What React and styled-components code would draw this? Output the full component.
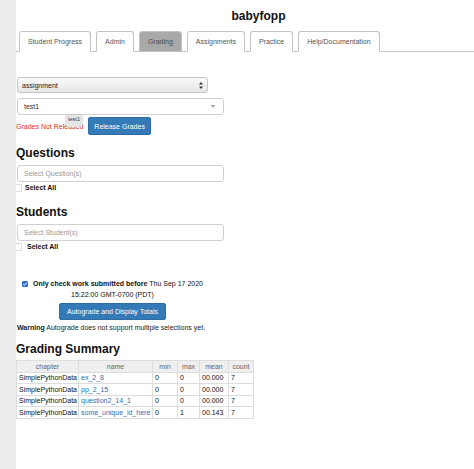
import styled, { createGlobalStyle } from 'styled-components';

const GlobalStyle = createGlobalStyle`
    html, body {
        margin: 0;
        padding: 0;
        background: #fff;
        font-family: "Liberation Sans", Arial, sans-serif;
        font-size: 7px;
        color: #222;
    }
`

const tabs = ['Student Progress', 'Admin', 'Grading', 'Assignments', 'Practice', 'Help/Documentation'];

const summary = [
    { chapter: 'SimplePythonData', name: 'ex_2_8', min: 0, max: 0, mean: '00.000', count: 7 },
    { chapter: 'SimplePythonData', name: 'pp_2_15', min: 0, max: 0, mean: '00.000', count: 7 },
    { chapter: 'SimplePythonData', name: 'question2_14_1', min: 0, max: 0, mean: '00.000', count: 7 },
    { chapter: 'SimplePythonData', name: 'some_unique_id_here', min: 0, max: 1, mean: '00.143', count: 7 },
];

const App = () => {
    return (
        <>
            <GlobalStyle />
            <Page>
                <Sidebar />
                <Main>
                    <Title>babyfopp</Title>
                    <TabBar>
                        {tabs.map(t => (
                            <Tab key={t} active={t === 'Grading'}>{t}</Tab>
                        ))}
                    </TabBar>

                    <NativeSelect>
                        <span>assignment</span>
                        <svg width="4" height="7" viewBox="0 0 4 7">
                            <path d="M2 0 L4 2.6 L0 2.6 Z M2 7 L4 4.4 L0 4.4 Z" fill="#333" />
                        </svg>
                    </NativeSelect>
                    <ChosenSelect>
                        <span>test1</span>
                        <svg width="4" height="3" viewBox="0 0 4 3">
                            <path d="M0 0 L4 0 L2 3 Z" fill="#999" />
                        </svg>
                    </ChosenSelect>

                    <GradesRow>
                        <NotReleased>Grades Not Released</NotReleased>
                        <Tooltip>test1</Tooltip>
                        <BlueButton>Release Grades</BlueButton>
                    </GradesRow>

                    <Heading top={11}>Questions</Heading>
                    <Input>Select Question(s)</Input>
                    <SelectAll indent={9}>
                        <EmptyBox />
                        Select All
                    </SelectAll>

                    <Heading top={13}>Students</Heading>
                    <Input>Select Student(s)</Input>
                    <SelectAll indent={11}>
                        <EmptyBox />
                        Select All
                    </SelectAll>

                    <Autograde>
                        <CheckLine>
                            <CheckedBox>
                                <svg width="6" height="6" viewBox="0 0 6 6">
                                    <path d="M1.2 3.1 L2.5 4.3 L4.8 1.6" stroke="#fff" strokeWidth="1" fill="none" />
                                </svg>
                            </CheckedBox>
                            <b>Only check work submitted before</b> Thu Sep 17 2020<br />
                            15:22:00 GMT-0700 (PDT)
                        </CheckLine>
                        <BlueButton wide>Autograde and Display Totals</BlueButton>
                    </Autograde>

                    <Warning><b>Warning</b> Autograde does not support multiple selections yet.</Warning>

                    <Heading top={9}>Grading Summary</Heading>
                    <Table>
                        <colgroup>
                            <col style={{ width: 62 }} />
                            <col style={{ width: 74 }} />
                            <col style={{ width: 25 }} />
                            <col style={{ width: 22 }} />
                            <col style={{ width: 29 }} />
                            <col style={{ width: 25 }} />
                        </colgroup>
                        <thead>
                            <tr>
                                <th>chapter</th>
                                <th>name</th>
                                <th>min</th>
                                <th>max</th>
                                <th>mean</th>
                                <th>count</th>
                            </tr>
                        </thead>
                        <tbody>
                            {summary.map(row => (
                                <tr key={row.name}>
                                    <td>{row.chapter}</td>
                                    <td><Link>{row.name}</Link></td>
                                    <td>{row.min}</td>
                                    <td>{row.max}</td>
                                    <td>{row.mean}</td>
                                    <td>{row.count}</td>
                                </tr>
                            ))}
                        </tbody>
                    </Table>
                </Main>
            </Page>
        </>
    )
}

const Page = styled.div`
    display: flex;
    min-height: 469px;
`

const Sidebar = styled.div`
    width: 16px;
    flex-shrink: 0;
    background: #ececec;
`

const Main = styled.div`
    flex: 1;
    padding-left: 1px;
`

const Title = styled.h1`
    margin: 0;
    padding: 9px 0 0 26px;
    text-align: center;
    font-size: 12px;
    line-height: 14px;
    font-weight: bold;
    color: #111;
`

const TabBar = styled.div`
    display: flex;
    gap: 5px;
    margin: 8px 0 0 -1px;
    padding-left: 3px;
    border-bottom: 1px solid #c8c8c8;
`

const Tab = styled.div`
    box-sizing: border-box;
    height: 21px;
    line-height: 19px;
    padding: 0 8px;
    margin-bottom: -1px;
    border: 1px solid #c4c4c4;
    border-bottom: ${p => p.active ? '1px solid #c4c4c4' : '1px solid #fff'};
    border-radius: 3px 3px 0 0;
    background: ${p => p.active ? '#a9a9a9' : '#fff'};
    color: ${p => p.active ? '#4a4a4a' : '#555'};
`

const NativeSelect = styled.div`
    display: flex;
    align-items: center;
    justify-content: space-between;
    box-sizing: border-box;
    width: 191px;
    height: 16px;
    margin-top: 25px;
    padding: 0 4px;
    border: 1px solid #c6c6c6;
    border-radius: 3px;
    background: linear-gradient(#fafafa, #e6e6e6);
    color: #222;
`

const ChosenSelect = styled.div`
    display: flex;
    align-items: center;
    justify-content: space-between;
    box-sizing: border-box;
    width: 207px;
    height: 17px;
    margin-top: 5px;
    padding: 0 8px 0 6px;
    border: 1px solid #d0d0d0;
    border-radius: 3px;
    background: #fff;
    color: #333;
`

const GradesRow = styled.div`
    position: relative;
    display: flex;
    align-items: center;
    gap: 5px;
    margin: 2px 0 0 -1px;
`

const NotReleased = styled.span`
    color: #e0312b;
`

const Tooltip = styled.span`
    position: absolute;
    left: 49px;
    top: -2px;
    width: 18px;
    height: 12px;
    box-sizing: border-box;
    padding-top: 1px;
    text-align: center;
    font-size: 5.5px;
    line-height: 6px;
    color: #333;
    background: #e6e6e6;
    border-radius: 4px;
    box-shadow: 0 0 1px rgba(0, 0, 0, 0.35);
`

const BlueButton = styled.div`
    display: inline-flex;
    align-items: center;
    box-sizing: border-box;
    height: ${p => p.wide ? '17px' : '18px'};
    padding: 0 ${p => p.wide ? '7px' : '5px'};
    background: #337ab7;
    border: 1px solid #2e6da4;
    border-radius: 2px;
    color: #fff;
`

const Heading = styled.h3`
    margin: ${p => p.top}px 0 0 -1px;
    font-size: 12px;
    line-height: 14px;
    font-weight: bold;
    color: #111;
`

const Input = styled.div`
    display: flex;
    align-items: center;
    box-sizing: border-box;
    width: 207px;
    height: 17px;
    margin-top: 5px;
    padding-left: 6px;
    border: 1px solid #d0d0d0;
    border-radius: 3px;
    color: #999;
`

const SelectAll = styled.div`
    display: flex;
    align-items: center;
    gap: ${p => p.indent - 6}px;
    height: 9px;
    margin: 1px 0 0 -1px;
    font-weight: bold;
    color: #111;
`

const EmptyBox = styled.span`
    width: 5px;
    height: 6px;
    border: 1px solid #ddd;
    border-left: none;
    background: #fff;
`

const Autograde = styled.div`
    display: flex;
    flex-direction: column;
    align-items: center;
    width: 193px;
    margin: 27px 0 0 -1px;
`

const CheckLine = styled.div`
    text-align: center;
    line-height: 11px;
    color: #111;
    margin-bottom: 3px;
`

const CheckedBox = styled.span`
    display: inline-flex;
    vertical-align: -1px;
    width: 6px;
    height: 6px;
    margin-right: 5px;
    background: #2f6fd8;
    border-radius: 1px;
`

const Warning = styled.div`
    margin-top: 3px;
    line-height: 10px;
    color: #222;
`

const Table = styled.table`
    margin: 4px 0 0 -1px;
    border-collapse: collapse;
    table-layout: fixed;
    width: 237px;

    th, td {
        border: 1px solid #ddd;
        padding: 1.5px 2px;
        line-height: 7.5px;
        white-space: nowrap;
        overflow: hidden;
        text-align: left;
        color: #111;
        font-weight: normal;
    }

    th {
        text-align: center;
        background: #efefef;
        color: #666;
    }
`

const Link = styled.span`
    color: #2f6eb3;
`

export default App;
